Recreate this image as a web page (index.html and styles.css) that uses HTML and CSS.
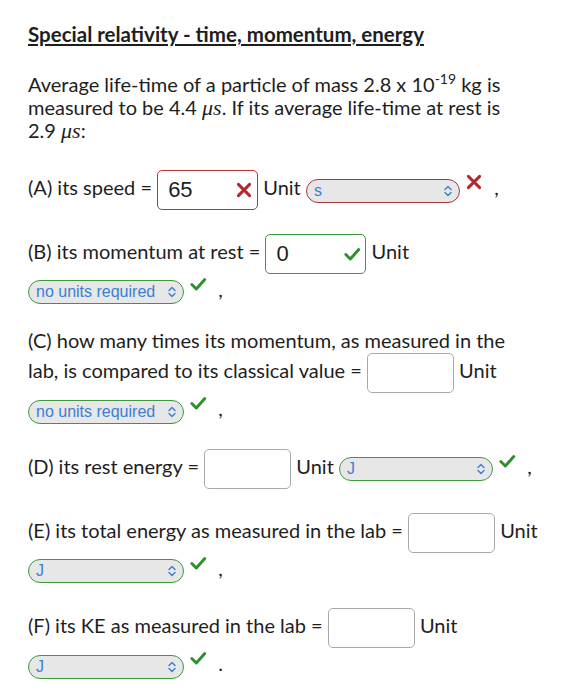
FILE: index.html
```html
<!DOCTYPE html>
<html lang="en">
<head>
    <meta charset="UTF-8">
    <meta name="viewport" content="width=device-width, initial-scale=1.0">
    <title>Special relativity</title>
    <link rel="stylesheet" href="styles.css">
</head>
<body>
    <div class="sheet">
        <h1 class="title">Special relativity - time, momentum, energy</h1>

        <p class="intro">Average life-time of a particle of mass 2.8 x 10<sup>-19</sup> kg is measured to be 4.4&nbsp;<i class="math">&mu;s</i>. If its average life-time at rest is 2.9&nbsp;<i class="math">&mu;s</i>:</p>

        <p class="q">(A) its speed = <span class="field wrong filled"><span class="val">65</span><svg class="mark cross" viewBox="0 0 16 16"><path d="M3 3 L13 13 M13 3 L3 13"/></svg></span> Unit <span class="unit wrong unit-wide"><span class="opt">s</span><svg class="chev" viewBox="0 0 10 14"><path d="M2 5.5 L5 2.5 L8 5.5 M2 8.5 L5 11.5 L8 8.5"/></svg></span> <svg class="mark cross" viewBox="0 0 16 16"><path d="M3 3 L13 13 M13 3 L3 13"/></svg> <span class="sep">,</span></p>

        <p class="q">(B) its momentum at rest = <span class="field right filled"><span class="val">0</span><svg class="mark check" viewBox="0 0 16 16"><path d="M2.5 8.5 L6.5 12.5 L14 4"/></svg></span> Unit <span class="unit right"><span class="opt">no units required</span><svg class="chev" viewBox="0 0 10 14"><path d="M2 5.5 L5 2.5 L8 5.5 M2 8.5 L5 11.5 L8 8.5"/></svg></span> <svg class="mark check" viewBox="0 0 16 16"><path d="M2.5 8.5 L6.5 12.5 L14 4"/></svg> <span class="sep">,</span></p>

        <p class="q">(C) how many times its momentum, as measured in the<br>lab, is compared to its classical value = <span class="field"></span> Unit <span class="unit right"><span class="opt">no units required</span><svg class="chev" viewBox="0 0 10 14"><path d="M2 5.5 L5 2.5 L8 5.5 M2 8.5 L5 11.5 L8 8.5"/></svg></span> <svg class="mark check" viewBox="0 0 16 16"><path d="M2.5 8.5 L6.5 12.5 L14 4"/></svg> <span class="sep">,</span></p>

        <p class="q">(D) its rest energy = <span class="field"></span> Unit <span class="unit right unit-wide"><span class="opt">J</span><svg class="chev" viewBox="0 0 10 14"><path d="M2 5.5 L5 2.5 L8 5.5 M2 8.5 L5 11.5 L8 8.5"/></svg></span> <svg class="mark check" viewBox="0 0 16 16"><path d="M2.5 8.5 L6.5 12.5 L14 4"/></svg> <span class="sep">,</span></p>

        <p class="q">(E) its total energy as measured in the lab = <span class="field"></span> Unit <span class="unit right"><span class="opt">J</span><svg class="chev" viewBox="0 0 10 14"><path d="M2 5.5 L5 2.5 L8 5.5 M2 8.5 L5 11.5 L8 8.5"/></svg></span> <svg class="mark check" viewBox="0 0 16 16"><path d="M2.5 8.5 L6.5 12.5 L14 4"/></svg> <span class="sep">,</span></p>

        <p class="q">(F) its KE as measured in the lab = <span class="field"></span> Unit <span class="unit right"><span class="opt">J</span><svg class="chev" viewBox="0 0 10 14"><path d="M2 5.5 L5 2.5 L8 5.5 M2 8.5 L5 11.5 L8 8.5"/></svg></span> <svg class="mark check" viewBox="0 0 16 16"><path d="M2.5 8.5 L6.5 12.5 L14 4"/></svg> <span class="sep">.</span></p>
    </div>
</body>
</html>
```

FILE: styles.css
```css
body { margin: 0; background: #fff; color: #1e1e1e; font-family: Lato, "Noto Sans", sans-serif; font-size: 20px; }
.sheet { width: 514px; padding: 22px 0 0 28px; }
.title { font-size: 20.5px; font-weight: bold; text-decoration: underline; margin: 0 0 27px; line-height: 24px; }
.intro { margin: 0 0 27px; line-height: 23px; }
.intro sup { font-size: 14px; line-height: 0; vertical-align: 8px; }
.math { font-family: "Liberation Serif", serif; font-style: italic; font-size: 22px; }
.q { margin: 0 0 22px; line-height: 24px; }
.field { display: inline-flex; align-items: center; justify-content: space-between; vertical-align: middle; box-sizing: border-box; width: 87px; height: 40px; margin: 1px 0; padding: 0 4px 0 10px; border: 1.5px solid #a9a9a9; border-radius: 5px; background: #fff; }
.field.filled { width: 101px; }
.field.wrong { border-color: #b5353b; }
.field.right { border-color: #3c9a3c; }
.val { font-family: "Liberation Sans", Arial, sans-serif; font-size: 22px; color: #1e1e1e; }
.unit { display: inline-flex; align-items: center; justify-content: space-between; vertical-align: middle; box-sizing: border-box; width: 156px; height: 24px; margin: 3px 0 2px; padding: 0 6px 0 7px; border: 1.5px solid #3c9a3c; border-radius: 12px; background: #e7e7e7; }
.unit-wide { width: 154px; }
.unit.wrong { border-color: #a8353a; }
.opt { font-family: "Liberation Sans", Arial, sans-serif; font-size: 16px; color: #3b7fd4; }
.chev { width: 10px; height: 14px; fill: none; stroke: #3b7fd4; stroke-width: 1.4; stroke-linecap: round; stroke-linejoin: round; }
.mark { width: 18px; height: 18px; vertical-align: 4px; fill: none; stroke-width: 2.6; stroke-linecap: round; stroke-linejoin: round; }
.field .mark { vertical-align: middle; }
.cross { stroke: #b3272d; }
.check { stroke: #2f8f2f; }
.sep { margin-left: 6px; }
```
